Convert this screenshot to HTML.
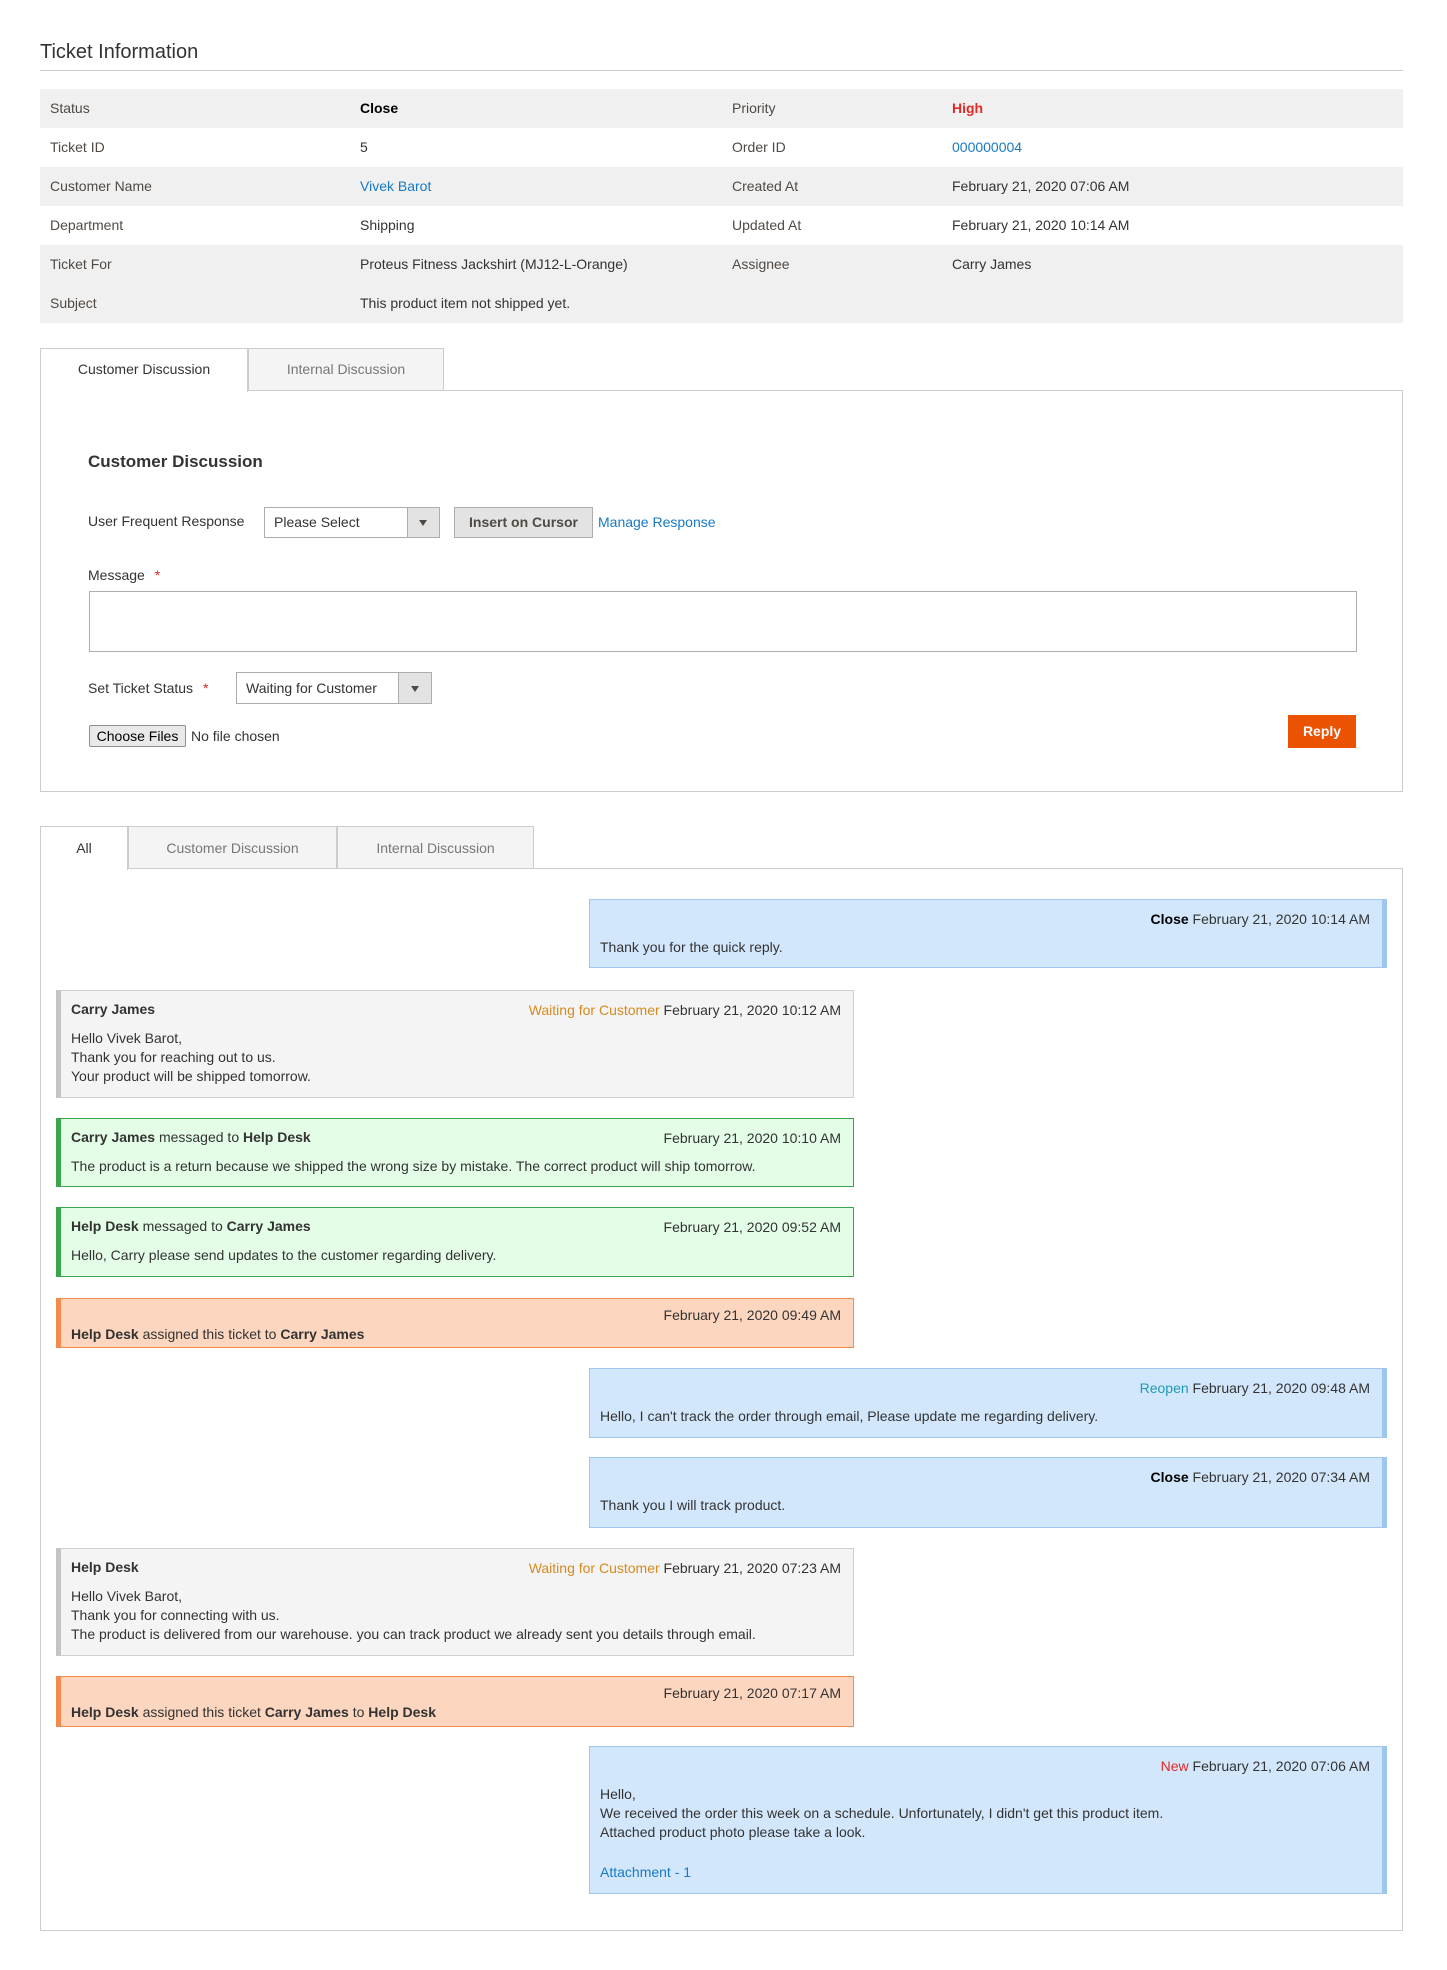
<!DOCTYPE html>
<html><head><meta charset="utf-8">
<style>
*{box-sizing:border-box;margin:0;padding:0}
body{width:1447px;height:1970px;background:#fff;font-family:"Liberation Sans",Arial,sans-serif;font-size:14px;color:#333;position:relative;overflow:hidden}
.a{position:absolute;white-space:nowrap}
.t{line-height:20px}
b{font-weight:bold}
.lbl{color:#514943}
.blue{color:#1979c3}
.row{position:absolute;left:40px;width:1363px;height:39px}
.g{background:#f0f0f0}
.box{position:absolute}
.bl{background:#d3e7fc;border:1px solid #9ec6ee;border-right:5px solid #9ec6ee}
.gr{background:#f4f4f4;border:1px solid #cfcfcf;border-left:5px solid #c4c4c4}
.gn{background:#e3fde6;border:1px solid #3ba54c;border-left:5px solid #3ba54c}
.or{background:#fcd6bf;border:1px solid #f58a4c;border-left:5px solid #f58a4c}
.meta{position:absolute;right:12px;white-space:nowrap;line-height:20px}
.txt{position:absolute;left:10px;white-space:nowrap;line-height:19px}
.wfc{color:#d68a1f}
</style></head><body>

<div class="a" style="left:40px;top:39px;font-size:20px;line-height:26px;color:#333">Ticket Information</div>
<div class="a" style="left:40px;top:70px;width:1363px;height:1px;background:#ccc"></div>

<div class="row g" style="top:89px"></div>
<div class="row" style="top:128px"></div>
<div class="row g" style="top:167px"></div>
<div class="row" style="top:206px"></div>
<div class="row g" style="top:245px;height:78px"></div>

<div class="a t lbl" style="left:50px;top:98px">Status</div>
<div class="a t" style="left:360px;top:98px;color:#000"><b>Close</b></div>
<div class="a t lbl" style="left:732px;top:98px">Priority</div>
<div class="a t" style="left:952px;top:98px;color:#e02b27"><b>High</b></div>

<div class="a t lbl" style="left:50px;top:137px">Ticket ID</div>
<div class="a t" style="left:360px;top:137px">5</div>
<div class="a t lbl" style="left:732px;top:137px">Order ID</div>
<div class="a t blue" style="left:952px;top:137px">000000004</div>

<div class="a t lbl" style="left:50px;top:176px">Customer Name</div>
<div class="a t blue" style="left:360px;top:176px">Vivek Barot</div>
<div class="a t lbl" style="left:732px;top:176px">Created At</div>
<div class="a t" style="left:952px;top:176px">February 21, 2020 07:06 AM</div>

<div class="a t lbl" style="left:50px;top:215px">Department</div>
<div class="a t" style="left:360px;top:215px">Shipping</div>
<div class="a t lbl" style="left:732px;top:215px">Updated At</div>
<div class="a t" style="left:952px;top:215px">February 21, 2020 10:14 AM</div>

<div class="a t lbl" style="left:50px;top:254px">Ticket For</div>
<div class="a t" style="left:360px;top:254px">Proteus Fitness Jackshirt (MJ12-L-Orange)</div>
<div class="a t lbl" style="left:732px;top:254px">Assignee</div>
<div class="a t" style="left:952px;top:254px">Carry James</div>

<div class="a t lbl" style="left:50px;top:293px">Subject</div>
<div class="a t" style="left:360px;top:293px">This product item not shipped yet.</div>

<!-- tabs 1 -->
<div class="box" style="left:40px;top:390px;width:1363px;height:402px;border:1px solid #ccc"></div>
<div class="box" style="left:40px;top:348px;width:208px;height:44px;border:1px solid #ccc;border-bottom:none;background:#fff"></div>
<div class="a t" style="left:40px;width:208px;text-align:center;top:359px">Customer Discussion</div>
<div class="box" style="left:248px;top:348px;width:196px;height:43px;border:1px solid #ccc;background:#f4f4f4"></div>
<div class="a t" style="left:248px;width:196px;text-align:center;top:359px;color:#777">Internal Discussion</div>

<div class="a" style="left:88px;top:450px;font-size:17px;line-height:24px;font-weight:bold;color:#333">Customer Discussion</div>

<div class="a t" style="left:88px;top:511px">User Frequent Response</div>
<div class="box" style="left:264px;top:507px;width:176px;height:31px;border:1px solid #adadad;background:#fff"></div>
<div class="box" style="left:407px;top:507px;width:33px;height:31px;border:1px solid #adadad;background:#e3e3e3"></div>
<div class="a" style="left:419px;top:520px;width:0;height:0;border-left:4px solid transparent;border-right:4px solid transparent;border-top:6px solid #514943"></div>
<div class="a t" style="left:274px;top:512px">Please Select</div>
<div class="box" style="left:454px;top:507px;width:139px;height:31px;border:1px solid #adadad;background:#e3e3e3"></div>
<div class="a t" style="left:454px;width:139px;text-align:center;top:512px;color:#514943;font-weight:bold">Insert on Cursor</div>
<div class="a t blue" style="left:598px;top:512px">Manage Response</div>

<div class="a t" style="left:88px;top:565px">Message <span style="color:#e22626;margin-left:6px">*</span></div>
<div class="box" style="left:89px;top:591px;width:1268px;height:61px;border:1px solid #adadad;background:#fff"></div>

<div class="a t" style="left:88px;top:678px">Set Ticket Status <span style="color:#e22626;margin-left:6px">*</span></div>
<div class="box" style="left:236px;top:672px;width:196px;height:32px;border:1px solid #adadad;background:#fff"></div>
<div class="box" style="left:398px;top:672px;width:34px;height:32px;border:1px solid #adadad;background:#e3e3e3"></div>
<div class="a" style="left:411px;top:686px;width:0;height:0;border-left:4px solid transparent;border-right:4px solid transparent;border-top:6px solid #514943"></div>
<div class="a t" style="left:246px;top:678px">Waiting for Customer</div>

<div class="box" style="left:89px;top:725px;width:97px;height:22px;border:1px solid #8f8f8f;background:#e9e9e9;border-radius:2px"></div>
<div class="a" style="left:89px;width:97px;text-align:center;top:725px;line-height:22px;color:#000">Choose Files</div>
<div class="a" style="left:191px;top:725px;line-height:22px">No file chosen</div>

<div class="box" style="left:1288px;top:715px;width:68px;height:33px;background:#eb5202"></div>
<div class="a" style="left:1288px;width:68px;text-align:center;top:715px;line-height:33px;color:#fff;font-weight:bold">Reply</div>

<!-- tabs 2 -->
<div class="box" style="left:40px;top:868px;width:1363px;height:1063px;border:1px solid #ccc"></div>
<div class="box" style="left:40px;top:826px;width:88px;height:44px;border:1px solid #ccc;border-bottom:none;background:#fff"></div>
<div class="a t" style="left:40px;width:88px;text-align:center;top:838px">All</div>
<div class="box" style="left:128px;top:826px;width:209px;height:43px;border:1px solid #ccc;background:#f4f4f4"></div>
<div class="a t" style="left:128px;width:209px;text-align:center;top:838px;color:#777">Customer Discussion</div>
<div class="box" style="left:337px;top:826px;width:197px;height:43px;border:1px solid #ccc;background:#f4f4f4"></div>
<div class="a t" style="left:337px;width:197px;text-align:center;top:838px;color:#777">Internal Discussion</div>

<!-- messages -->
<div class="box bl" style="left:589px;top:899px;width:798px;height:69px">
 <div class="meta" style="top:9px"><b style="color:#000">Close</b> February 21, 2020 10:14 AM</div>
 <div class="txt" style="top:38px">Thank you for the quick reply.</div>
</div>

<div class="box gr" style="left:56px;top:990px;width:798px;height:108px">
 <div class="txt" style="top:9px;left:10px"><b>Carry James</b></div>
 <div class="meta" style="top:9px"><span class="wfc">Waiting for Customer</span> February 21, 2020 10:12 AM</div>
 <div class="txt" style="top:38px">Hello Vivek Barot,<br>Thank you for reaching out to us.<br>Your product will be shipped tomorrow.</div>
</div>

<div class="box gn" style="left:56px;top:1118px;width:798px;height:69px">
 <div class="txt" style="top:9px"><b>Carry James</b> messaged to <b>Help Desk</b></div>
 <div class="meta" style="top:9px">February 21, 2020 10:10 AM</div>
 <div class="txt" style="top:38px">The product is a return because we shipped the wrong size by mistake. The correct product will ship tomorrow.</div>
</div>

<div class="box gn" style="left:56px;top:1207px;width:798px;height:70px">
 <div class="txt" style="top:9px"><b>Help Desk</b> messaged to <b>Carry James</b></div>
 <div class="meta" style="top:9px">February 21, 2020 09:52 AM</div>
 <div class="txt" style="top:38px">Hello, Carry please send updates to the customer regarding delivery.</div>
</div>

<div class="box or" style="left:56px;top:1298px;width:798px;height:50px">
 <div class="meta" style="top:6px">February 21, 2020 09:49 AM</div>
 <div class="txt" style="top:26px"><b>Help Desk</b> assigned this ticket to <b>Carry James</b></div>
</div>

<div class="box bl" style="left:589px;top:1368px;width:798px;height:70px">
 <div class="meta" style="top:9px"><span style="color:#1e9bb5">Reopen</span> February 21, 2020 09:48 AM</div>
 <div class="txt" style="top:38px">Hello, I can't track the order through email, Please update me regarding delivery.</div>
</div>

<div class="box bl" style="left:589px;top:1457px;width:798px;height:71px">
 <div class="meta" style="top:9px"><b style="color:#000">Close</b> February 21, 2020 07:34 AM</div>
 <div class="txt" style="top:38px">Thank you I will track product.</div>
</div>

<div class="box gr" style="left:56px;top:1548px;width:798px;height:108px">
 <div class="txt" style="top:9px"><b>Help Desk</b></div>
 <div class="meta" style="top:9px"><span class="wfc">Waiting for Customer</span> February 21, 2020 07:23 AM</div>
 <div class="txt" style="top:38px">Hello Vivek Barot,<br>Thank you for connecting with us.<br>The product is delivered from our warehouse. you can track product we already sent you details through email.</div>
</div>

<div class="box or" style="left:56px;top:1676px;width:798px;height:51px">
 <div class="meta" style="top:6px">February 21, 2020 07:17 AM</div>
 <div class="txt" style="top:26px"><b>Help Desk</b> assigned this ticket <b>Carry James</b> to <b>Help Desk</b></div>
</div>

<div class="box bl" style="left:589px;top:1746px;width:798px;height:148px">
 <div class="meta" style="top:9px"><span style="color:#e02b27">New</span> February 21, 2020 07:06 AM</div>
 <div class="txt" style="top:38px">Hello,<br>We received the order this week on a schedule. Unfortunately, I didn't get this product item.<br>Attached product photo please take a look.</div>
 <div class="txt blue" style="top:116px">Attachment - 1</div>
</div>

</body></html>
